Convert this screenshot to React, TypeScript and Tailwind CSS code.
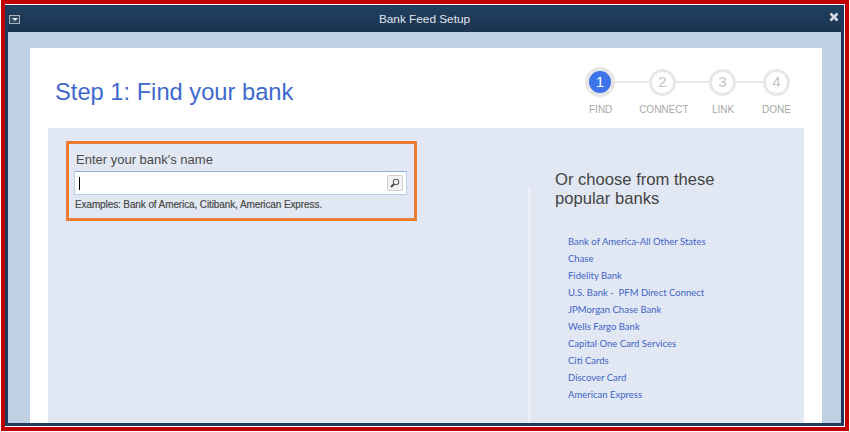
const BANKS = [
  'Bank of America-All Other States',
  'Chase',
  'Fidelity Bank',
  'U.S. Bank -  PFM Direct Connect',
  'JPMorgan Chase Bank',
  'Wells Fargo Bank',
  'Capital One Card Services',
  'Citi Cards',
  'Discover Card',
  'American Express',
]

function Stepper() {
  return (
    <div className="mr-[13px] flex w-[206px] flex-col pt-[19px]">
      <div className="flex items-center">
        <div className="flex h-[30px] w-[30px] items-center justify-center rounded-full border-4 border-[#e6e6e6] bg-[#3f73ea] text-[15px] text-white">
          1
        </div>
        <div className="h-[2px] w-[34px] bg-[#e8e8e8]" />
        <div className="flex h-[27px] w-[27px] items-center justify-center rounded-full border-[3px] border-[#e8e8e8] text-[15px] text-[#c4c4c4]">
          2
        </div>
        <div className="h-[2px] w-[33px] bg-[#e8e8e8]" />
        <div className="flex h-[27px] w-[27px] items-center justify-center rounded-full border-[3px] border-[#e8e8e8] text-[15px] text-[#c4c4c4]">
          3
        </div>
        <div className="h-[2px] w-[27px] bg-[#e8e8e8]" />
        <div className="flex h-[27px] w-[27px] items-center justify-center rounded-full border-[3px] border-[#e8e8e8] text-[15px] text-[#c4c4c4]">
          4
        </div>
      </div>
      <div className="mt-[6px] flex h-[14px] whitespace-nowrap text-[10px] leading-[14px] text-[#a8a8a8]">
        <span className="w-[55px] pl-[4px]">FIND</span>
        <span className="w-[73px]">CONNECT</span>
        <span className="w-[51px] pl-px">LINK</span>
        <span className="pl-px">DONE</span>
      </div>
    </div>
  )
}

function SearchBox() {
  return (
    <div className="h-[80px] w-[351px] border-[3px] border-[#ed7d31] pl-[5px] pt-[8px]">
      <div className="pl-[2px] text-[13px] leading-[16px] text-[#4a4a4a]">Enter your bank's name</div>
      <div className="mt-[3px] flex h-[24px] w-[333px] items-center justify-between border border-[#b5d0e8] border-t-[#8fb0d0] bg-white pl-[4px] pr-[3px]">
        <div className="h-[13px] w-px bg-black" />
        <div className="flex h-[16px] w-[16px] items-center justify-center rounded-[2px] border border-[#cfcfcf] bg-[#f4f4f4]">
          <svg width="10" height="10" viewBox="0 0 10 10" fill="none">
            <circle cx="6" cy="4" r="2.7" stroke="#666" strokeWidth="1.1" />
            <path d="M4 6 L1 9" stroke="#444" strokeWidth="1.8" />
          </svg>
        </div>
      </div>
      <div className="mt-[3px] pl-px text-[10px] leading-[14px] tracking-[-0.11px] text-[#4a4a4a] [-webkit-text-stroke:0.2px_#4a4a4a]">
        Examples: Bank of America, Citibank, American Express.
      </div>
    </div>
  )
}

export default function App() {
  return (
    <div className="h-[432px] w-[850px] overflow-hidden bg-white pb-px pl-px pr-px font-['Liberation_Sans',sans-serif]">
      <div className="h-full border-4 border-[#c00000] bg-white pb-px pr-[1px] pt-px">
        <div className="flex h-full flex-col border-[3px] border-t border-[#1f3a5c]">
          <div className="flex h-[26px] shrink-0 items-center justify-between bg-gradient-to-b from-[#20405f] to-[#1b3350] pl-px">
            <div className="flex h-[9px] w-[11px] items-center justify-center border border-[#a9b0b8] bg-[#2f4a66]">
              <div className="h-0 w-0 border-x-[3px] border-t-[3px] border-x-transparent border-t-[#e8ecf0]" />
            </div>
            <span className="pt-[2px] text-[11.8px] text-[#e2e6ec]">Bank Feed Setup</span>
            <svg width="10" height="10" viewBox="0 0 10 10" className="mb-[4px] mr-[2px]">
              <path d="M1.5 1.5 L8.5 8.5 M8.5 1.5 L1.5 8.5" stroke="#d6dbe1" strokeWidth="2.6" />
            </svg>
          </div>
          <div className="flex min-h-0 flex-1 flex-col bg-[#bfd0e4] pl-[22px] pr-[19px] pt-[16px]">
            <div className="flex min-h-0 flex-1 flex-col bg-white px-[18px]">
              <div className="flex h-[80px] shrink-0 items-start justify-between">
                <h1 className="pl-[7px] pt-[28px] text-[23.7px] font-normal leading-[32px] text-[#3f68cc]">
                  Step 1: Find your bank
                </h1>
                <Stepper />
              </div>
              <div className="flex min-h-0 flex-1 bg-[#e1e8f3]">
                <div className="w-[480px] shrink-0 pl-[18px] pt-[13px]">
                  <SearchBox />
                </div>
                <div className="mt-[60px] border-l-2 border-[#edf1f8] pl-[25px]">
                  <h2 className="-mt-[18px] w-[190px] text-[16.6px] font-normal leading-[19px] text-[#444444]">
                    Or choose from these popular banks
                  </h2>
                  <ul className="mt-[25px] pl-[13px] font-['Lato',sans-serif] text-[9.5px] leading-[17px] text-[#3f63c6]">
                    {BANKS.map((bank) => (
                      <li key={bank} className="whitespace-pre">{bank}</li>
                    ))}
                  </ul>
                </div>
              </div>
            </div>
          </div>
        </div>
      </div>
    </div>
  )
}
